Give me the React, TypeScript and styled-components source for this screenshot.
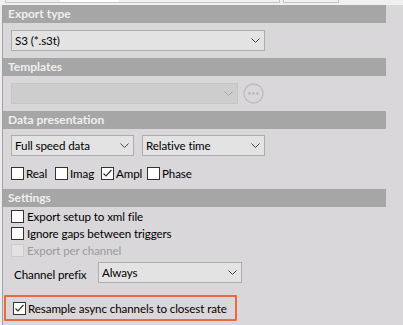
import React from "react";
import styled, { createGlobalStyle } from "styled-components";

const Global = createGlobalStyle`
  html, body { margin: 0; padding: 0; background: #ececec; }
  body { font-family: "Lato", "Liberation Sans", sans-serif; font-size: 11.6px; letter-spacing: -0.1px; color: #000; }
`;

const Page = styled.div`
  width: 403px;
  height: 325px;
  overflow: hidden;
  display: flex;
  flex-direction: column;
  background: #ececec;
`;

const TopStrip = styled.div`
  height: 5px;
  flex: none;
  display: flex;
  gap: 3px;
  padding-left: 5px;
  background: #f0f0f0;
`;

const TopBox = styled.div<{ $w: number }>`
  width: ${(p) => p.$w}px;
  height: 2px;
  border: 1px solid #c4c4c4;
  border-top: none;
  background: #f0f0f0;
  display: flex;
`;

const WhiteChunk = styled.div`
  margin-left: 54px;
  width: 59px;
  background: #fff;
`;

const Panel = styled.div`
  flex: 1;
  margin-left: 2px;
  border-left: 1px solid #a2a2a2;
  background: #d9d7da;
  display: flex;
  flex-direction: column;
`;

const Header = styled.div<{ $mt?: number }>`
  width: 383px;
  height: 18px;
  flex: none;
  margin-top: ${(p) => p.$mt ?? 0}px;
  background: #a6a6a6;
  color: #efefef;
  font-weight: 700;
  font-size: 12px;
  letter-spacing: 0;
  line-height: 18px;
  padding-left: 5px;
  box-sizing: border-box;
`;

const Body = styled.div<{ $pt: number }>`
  padding: ${(p) => p.$pt}px 0 0 8px;
  display: flex;
  flex-direction: column;
`;

const Row = styled.div<{ $gap?: number; $mt?: number }>`
  display: flex;
  align-items: center;
  gap: ${(p) => p.$gap ?? 8}px;
  margin-top: ${(p) => p.$mt ?? 0}px;
`;

const Select = styled.div<{ $w: number; $disabled?: boolean }>`
  width: ${(p) => p.$w}px;
  height: 21px;
  box-sizing: border-box;
  border: 1px solid ${(p) => (p.$disabled ? "#c6c6c6" : "#adadad")};
  background: ${(p) => (p.$disabled ? "#cdcdcd" : "#e3e3e3")};
  display: flex;
  align-items: center;
  justify-content: space-between;
  padding: 0 4px 0 3px;
  color: #000;
  white-space: nowrap;
`;

const Chevron = ({ color = "#444" }: { color?: string }) => (
  <svg width="9" height="5" viewBox="0 0 9 5" style={{ display: "block" }}>
    <polyline points="0.5,0.5 4.5,4.5 8.5,0.5" fill="none" stroke={color} strokeWidth="1" />
  </svg>
);

const MoreButton = styled.div`
  width: 21px;
  height: 21px;
  display: flex;
  align-items: center;
  justify-content: center;
`;

const Box = styled.span<{ $disabled?: boolean }>`
  width: 13px;
  height: 13px;
  box-sizing: border-box;
  border: 1px solid ${(p) => (p.$disabled ? "#cbcbcb" : "#333")};
  background: ${(p) => (p.$disabled ? "#e2e2e2" : "#fff")};
  display: flex;
  align-items: center;
  justify-content: center;
  flex: none;
`;

const Check = styled.label<{ $disabled?: boolean; $gap?: number; $w?: number }>`
  display: flex;
  align-items: center;
  gap: ${(p) => p.$gap ?? 2}px;
  height: 13px;
  width: ${(p) => (p.$w ? `${p.$w}px` : "auto")};
  color: ${(p) => (p.$disabled ? "#9b9b9b" : "#000")};
  white-space: nowrap;
`;

const Tick = () => (
  <svg width="11" height="11" viewBox="0 0 11 11" style={{ display: "block" }}>
    <polyline points="1.5,5.5 4,8 9.5,2" fill="none" stroke="#333" strokeWidth="1.2" />
  </svg>
);

const CheckBox = ({
  label,
  checked,
  disabled,
  gap,
  w,
}: {
  label: string;
  checked?: boolean;
  disabled?: boolean;
  gap?: number;
  w?: number;
}) => (
  <Check $disabled={disabled} $gap={gap} $w={w}>
    <Box $disabled={disabled}>{checked && <Tick />}</Box>
    {label}
  </Check>
);

const SettingsList = styled.div`
  display: flex;
  flex-direction: column;
  gap: 4px;
`;

const PrefixRow = styled.div`
  display: flex;
  align-items: center;
  margin-top: 5px;
  padding-left: 3px;
`;

const PrefixLabel = styled.span`
  width: 84px;
  padding-top: 4px;
`;

const Highlight = styled.div`
  margin: 12px 0 0 -7px;
  width: 233px;
  height: 26px;
  box-sizing: border-box;
  border: 2px solid #ec6a3f;
  border-radius: 1px;
  display: flex;
  align-items: center;
  padding-left: 7px;
`;

export default function App() {
  return (
    <Page>
      <Global />
      <TopStrip>
        <TopBox $w={273}>
          <WhiteChunk />
        </TopBox>
        <TopBox $w={54} />
      </TopStrip>
      <Panel>
        <Header>Export type</Header>
        <Body $pt={7}>
          <Select $w={254}>
            <span>S3 (*.s3t)</span>
            <Chevron />
          </Select>
        </Body>
        <Header $mt={7}>Templates</Header>
        <Body $pt={7}>
          <Row $gap={5}>
            <Select $w={227} $disabled>
              <span />
              <Chevron color="#a8a8a8" />
            </Select>
            <MoreButton>
              <svg width="21" height="21" viewBox="0 0 21 21">
                <circle cx="10.5" cy="10.5" r="9.5" fill="none" stroke="#bcbcbc" strokeWidth="1.3" />
                <circle cx="6.5" cy="10.5" r="1.4" fill="#bcbcbc" />
                <circle cx="10.5" cy="10.5" r="1.4" fill="#bcbcbc" />
                <circle cx="14.5" cy="10.5" r="1.4" fill="#bcbcbc" />
              </svg>
            </MoreButton>
          </Row>
        </Body>
        <Header $mt={7}>Data presentation</Header>
        <Body $pt={6}>
          <Row>
            <Select $w={123}>
              <span>Full speed data</span>
              <Chevron />
            </Select>
            <Select $w={123}>
              <span>Relative time</span>
              <Chevron />
            </Select>
          </Row>
          <Row $gap={0} $mt={11}>
            <CheckBox label="Real" w={44} />
            <CheckBox label="Imag" w={46} />
            <CheckBox label="Ampl" w={46} checked />
            <CheckBox label="Phase" />
          </Row>
        </Body>
        <Header $mt={9}>Settings</Header>
        <Body $pt={3}>
          <SettingsList>
            <CheckBox label="Export setup to xml file" gap={3} />
            <CheckBox label="Ignore gaps between triggers" gap={3} />
            <CheckBox label="Export per channel" gap={3} disabled />
          </SettingsList>
          <PrefixRow>
            <PrefixLabel>Channel prefix</PrefixLabel>
            <Select $w={144}>
              <span>Always</span>
              <Chevron />
            </Select>
          </PrefixRow>
          <Highlight>
            <CheckBox label="Resample async channels to closest rate" checked gap={2} />
          </Highlight>
        </Body>
      </Panel>
    </Page>
  );
}
